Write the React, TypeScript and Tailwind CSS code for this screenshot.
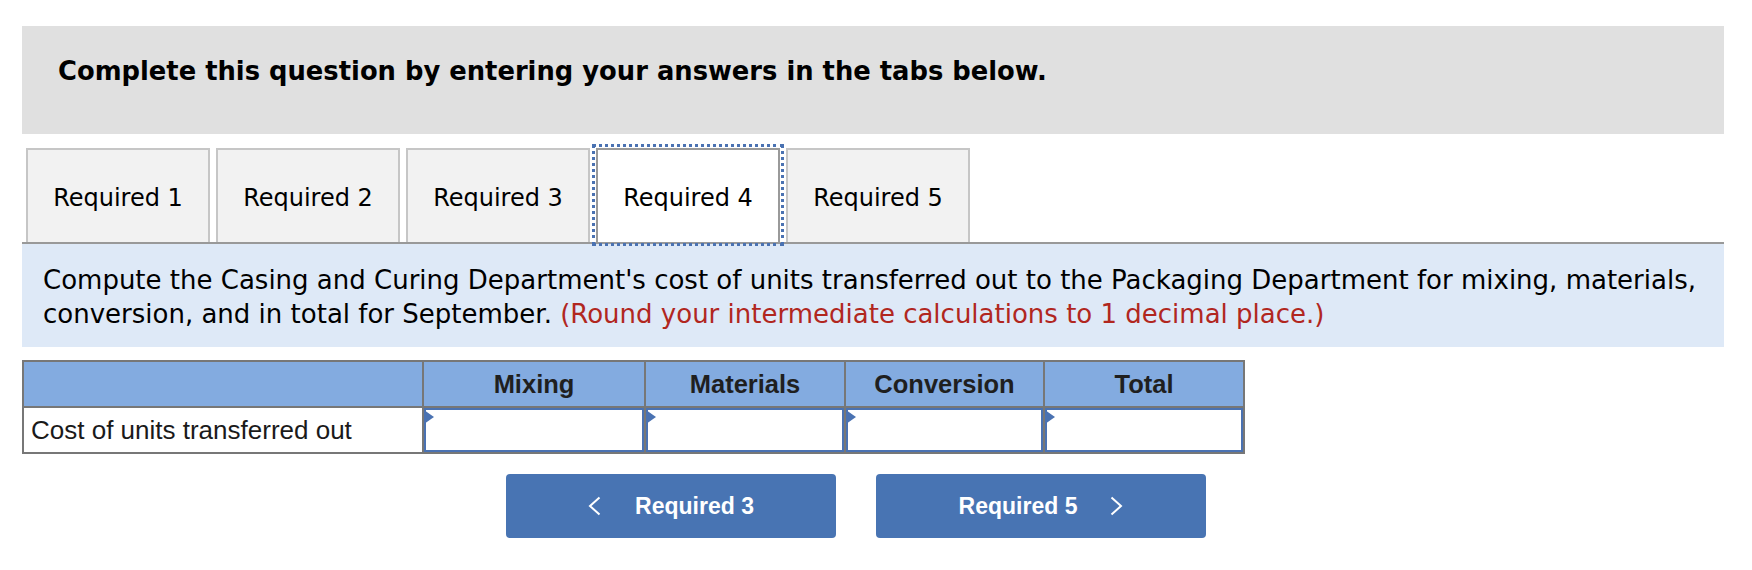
import React from 'react';

const tabs = ['Required 1', 'Required 2', 'Required 3', 'Required 4', 'Required 5'];
const columns = ['Mixing', 'Materials', 'Conversion', 'Total'];
const colWidths = ['w-[222px]', 'w-[200px]', 'w-[199px]', 'w-[200px]'];

function Chevron({ dir }: { dir: 'left' | 'right' }) {
  return (
    <svg width="13" height="20" viewBox="0 0 13 20" fill="none" stroke="white" strokeWidth="2">
      {dir === 'left' ? <polyline points="11.5,1.5 2,10 11.5,18.5" /> : <polyline points="1.5,1.5 11,10 1.5,18.5" />}
    </svg>
  );
}

function AnswerCell({ width }: { width: string }) {
  return (
    <td className={`${width} p-0 border-2 border-[#777777]`}>
      <div className="relative h-[44px] border-2 border-[#4a72b2] bg-white">
        {/* little marker in the corner of each input */}
        <span className="absolute -left-[2px] top-0 w-0 h-0 border-y-[7px] border-y-transparent border-l-[10px] border-l-[#4a72b2]" />
      </div>
    </td>
  );
}

export default function App() {
  const active = 3;

  return (
    <div className="w-[1752px] h-[570px] bg-white overflow-hidden">
      <div className="ml-[22px] w-[1702px] pt-[26px]">
        {/* instructions banner */}
        <div className="h-[108px] bg-[#e0e0e0] pl-[36px] pt-[29px]">
          <h1 className="font-['DejaVu_Sans',sans-serif] font-bold text-[25.8px] leading-[32px] text-black">
            Complete this question by entering your answers in the tabs below.
          </h1>
        </div>

        {/* tab strip */}
        <div className="mt-[14px] border-b-2 border-[#999999]">
          <div className="flex gap-[6px] pl-[4px]">
            {tabs.map((tab, i) =>
              i === active ? (
                <div
                  key={tab}
                  className="w-[184px] h-[94px] pt-[3px] -mb-[2px] bg-white border-2 border-b-0 border-[#9a9a9a] outline-[3px] outline-dotted outline-[#4a72b2] outline-offset-[1px] flex items-center justify-center font-['DejaVu_Sans',sans-serif] text-[24px] text-black"
                >
                  {tab}
                </div>
              ) : (
                <div
                  key={tab}
                  className="w-[184px] h-[94px] pt-[3px] bg-[#f2f2f2] border-2 border-b-0 border-[#c6c6c6] flex items-center justify-center font-['DejaVu_Sans',sans-serif] text-[24px] text-black"
                >
                  {tab}
                </div>
              )
            )}
          </div>
        </div>

        {/* question prompt */}
        <div className="h-[103px] bg-[#dee9f7] pl-[21px] pt-[19px] font-['DejaVu_Sans',sans-serif] text-[26px] leading-[34px] text-black whitespace-nowrap">
          Compute the Casing and Curing Department's cost of units transferred out to the Packaging Department for mixing, materials,
          <br />
          conversion, and in total for September.{' '}
          <span className="text-[#b1271f]">(Round your intermediate calculations to 1 decimal place.)</span>
        </div>

        {/* answer table */}
        <table className="mt-[13px] border-collapse border-2 border-[#777777] font-['Liberation_Sans',Arial,sans-serif]">
          <thead>
            <tr className="h-[46px] bg-[#83abe0]">
              <th className="w-[400px] p-0 border-2 border-[#777777]" />
              {columns.map((col, i) => (
                <th key={col} className={`${colWidths[i]} p-0 border-2 border-[#777777] text-[25.5px] leading-[30px] font-bold text-[#1f1f1f] text-center`}>
                  {col}
                </th>
              ))}
            </tr>
          </thead>
          <tbody>
            <tr>
              <td className="w-[400px] p-0 border-2 border-[#777777] pl-[7px] text-[26px] leading-[30px] text-[#1a1a1a]">
                Cost of units transferred out
              </td>
              {colWidths.map((w, i) => (
                <AnswerCell key={i} width={w} />
              ))}
            </tr>
          </tbody>
        </table>

        {/* prev / next */}
        <div className="mt-[20px] ml-[484px] flex gap-[40px] font-['Liberation_Sans',Arial,sans-serif]">
          <button className="w-[330px] h-[64px] rounded-[4px] bg-[#4874b3] text-white text-[23px] font-bold flex items-center justify-center gap-[34px]">
            <Chevron dir="left" />
            <span>Required 3</span>
          </button>
          <button className="w-[330px] h-[64px] rounded-[4px] bg-[#4874b3] text-white text-[23px] font-bold flex items-center justify-center gap-[33px]">
            <span>Required 5</span>
            <Chevron dir="right" />
          </button>
        </div>
      </div>
    </div>
  );
}
